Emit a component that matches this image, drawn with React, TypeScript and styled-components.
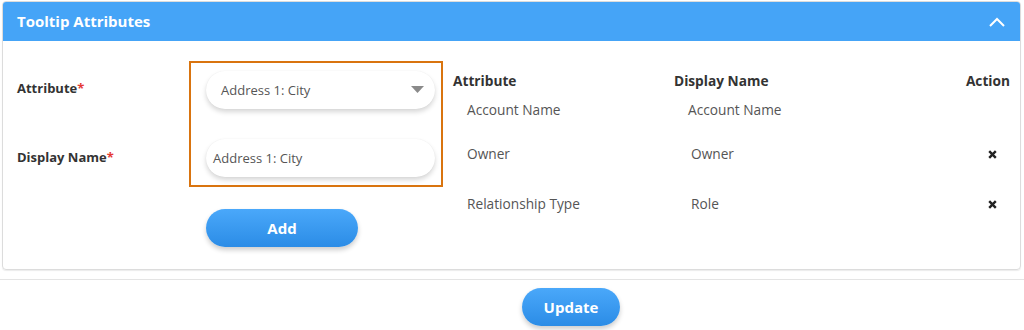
import React from "react";
import styled, { createGlobalStyle } from "styled-components";

const GlobalStyle = createGlobalStyle`
  body {
    margin: 0;
    background: #fff;
    font-family: "Open Sans", "Noto Sans", sans-serif;
  }
`;

const Page = styled.div`
  width: 1024px;
  height: 330px;
  padding-top: 1px;
  box-sizing: border-box;
  overflow: hidden;
`;

const Panel = styled.div`
  margin: 0 3px 0 2px;
  border: 1px solid #dcdcdc;
  border-radius: 4px;
  overflow: hidden;
  box-shadow: 0 1px 1px rgba(0, 0, 0, 0.08);
`;

const Header = styled.div`
  height: 39px;
  background: #45a4f7;
  display: flex;
  align-items: center;
  justify-content: space-between;
  padding: 0 14px 0 14px;
`;

const Title = styled.div`
  color: #fff;
  font-size: 15px;
  font-weight: 700;
  margin-top: -2px;
`;

const Body = styled.div`
  display: flex;
  padding: 20px 10px 22px 0;
`;

const FormColumn = styled.div`
  display: flex;
  flex-direction: column;
`;

const FieldsRow = styled.div`
  display: flex;
`;

const LabelColumn = styled.div`
  width: 186px;
  padding-left: 14px;
  box-sizing: border-box;
  display: flex;
  flex-direction: column;
`;

const Label = styled.div<{ $top: number }>`
  margin-top: ${(p) => p.$top}px;
  font-size: 13px;
  line-height: 18px;
  font-weight: 700;
  color: #333;
`;

const Star = styled.span`
  color: #e53935;
`;

const Highlight = styled.div`
  width: 254px;
  height: 126px;
  box-sizing: border-box;
  border: 2px solid #d9740f;
  padding: 8px 6px 8px 15px;
  display: flex;
  flex-direction: column;
  gap: 30px;
`;

const Pill = styled.div<{ $padLeft: number }>`
  height: 38px;
  border-radius: 19px;
  background: #fff;
  box-shadow: 0 3px 5px rgba(0, 0, 0, 0.16), 0 0 1px rgba(0, 0, 0, 0.08);
  display: flex;
  align-items: center;
  justify-content: space-between;
  padding: 0 11px 0 ${(p) => p.$padLeft}px;
  font-size: 13px;
  color: #555;
`;

const PillButton = styled.button<{ $width: number }>`
  width: ${(p) => p.$width}px;
  height: 38px;
  border: none;
  border-radius: 19px;
  background: linear-gradient(#4aa8fa, #2b8ce6);
  box-shadow: 0 3px 5px rgba(0, 0, 0, 0.2);
  color: #fff;
  font-family: "Open Sans", sans-serif;
  font-size: 15px;
  font-weight: 700;
  padding: 0;
`;

const AddWrap = styled.div`
  padding: 22px 0 0 203px;
`;

const Table = styled.div`
  flex: 1;
  margin: 7px 0 0 10px;
  display: flex;
  flex-direction: column;
`;

const Row = styled.div<{ $height: number }>`
  height: ${(p) => p.$height}px;
  display: grid;
  grid-template-columns: 221px 1fr 56px;
  align-items: center;
`;

const HeadCell = styled.div<{ $right?: boolean }>`
  font-size: 13.7px;
  font-weight: 700;
  color: #333;
  text-align: ${(p) => (p.$right ? "right" : "left")};
`;

const Cell = styled.div<{ $pad: number }>`
  font-size: 13.7px;
  color: #555;
  padding-left: ${(p) => p.$pad}px;
`;

const ActionCell = styled.div`
  display: flex;
  justify-content: center;
  padding-left: 20px;
  padding-top: 3px;
`;

const Divider = styled.div`
  margin-top: 9px;
  height: 1px;
  background: #e4e4e4;
`;

const Footer = styled.div`
  padding: 8px 0 0 522px;
`;

const ChevronUp = () => (
  <svg width="18" height="12" viewBox="0 0 18 12">
    <polyline points="2,10 9,3 16,10" fill="none" stroke="#fff" strokeWidth="2" />
  </svg>
);

const Caret = () => (
  <svg width="13" height="8" viewBox="0 0 13 8">
    <polygon points="0,0 13,0 6.5,7" fill="#8a8a8a" />
  </svg>
);

const Cross = () => (
  <svg width="9" height="9" viewBox="0 0 9 9">
    <path d="M1.2 1.2 L7.8 7.8 M7.8 1.2 L1.2 7.8" stroke="#222" strokeWidth="2.4" />
  </svg>
);

const rows = [
  { attr: "Account Name", name: "Account Name", namePad: 14, height: 34, removable: false },
  { attr: "Owner", name: "Owner", namePad: 17, height: 54, removable: true },
  { attr: "Relationship Type", name: "Role", namePad: 17, height: 46, removable: true },
];

export default function App() {
  return (
    <Page>
      <GlobalStyle />
      <Panel>
        <Header>
          <Title>Tooltip Attributes</Title>
          <ChevronUp />
        </Header>
        <Body>
          <FormColumn>
            <FieldsRow>
              <LabelColumn>
                <Label $top={18}>
                  Attribute<Star>*</Star>
                </Label>
                <Label $top={51}>
                  Display Name<Star>*</Star>
                </Label>
              </LabelColumn>
              <Highlight>
                <Pill $padLeft={15}>
                  <span>Address 1: City</span>
                  <Caret />
                </Pill>
                <Pill $padLeft={7}>
                  <span>Address 1: City</span>
                </Pill>
              </Highlight>
            </FieldsRow>
            <AddWrap>
              <PillButton $width={152}>Add</PillButton>
            </AddWrap>
          </FormColumn>
          <Table>
            <Row $height={24}>
              <HeadCell>Attribute</HeadCell>
              <HeadCell>Display Name</HeadCell>
              <HeadCell $right>Action</HeadCell>
            </Row>
            {rows.map((r) => (
              <Row key={r.attr} $height={r.height}>
                <Cell $pad={14}>{r.attr}</Cell>
                <Cell $pad={r.namePad}>{r.name}</Cell>
                <ActionCell>{r.removable && <Cross />}</ActionCell>
              </Row>
            ))}
          </Table>
        </Body>
      </Panel>
      <Divider />
      <Footer>
        <PillButton $width={98}>Update</PillButton>
      </Footer>
    </Page>
  );
}
